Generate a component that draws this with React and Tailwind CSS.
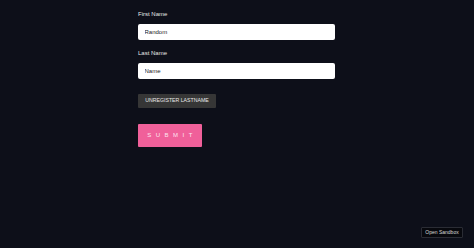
import React from "react";

const Field = ({ label, value, className }) => {
  return (
    <div className={"flex flex-col " + className}>
      <label className="text-[6px] leading-[8px] text-[#e6e6e6]">{label}</label>
      <input
        defaultValue={value}
        className="mt-[6px] h-[16px] w-[197px] rounded-[2px] bg-white px-[6.5px] text-[6px] text-[#222] outline-none"
      />
    </div>
  );
};

const App = () => {
  return (
    <div className="relative min-h-screen bg-[#0d0f19] font-['Liberation_Sans',Arial,sans-serif]">
      <div className="flex flex-col pl-[138px] pt-[10px]">
        <Field label="First Name" value="Random" />
        <Field label="Last Name" value="Name" className="mt-[8.5px]" />
        <button className="mt-[15px] flex h-[14px] w-[78px] items-center justify-center rounded-[1px] bg-[#363636] text-[5.2px] text-[#e8e8e8]">
          UNREGISTER LASTNAME
        </button>
        <button className="mt-[16px] flex h-[23px] w-[64px] items-center justify-center rounded-[1px] bg-[#f0609a] pl-[4px] text-[6px] tracking-[4.5px] text-[#fde4ef]">
          SUBMIT
        </button>
      </div>
      <button className="absolute bottom-[10px] right-[11px] flex h-[11px] w-[42px] items-center justify-center rounded-[1px] border border-[#2a2c34] bg-[#07080d] text-[5px] text-[#d8d8d8]">
        Open Sandbox
      </button>
    </div>
  );
};

export default App;
